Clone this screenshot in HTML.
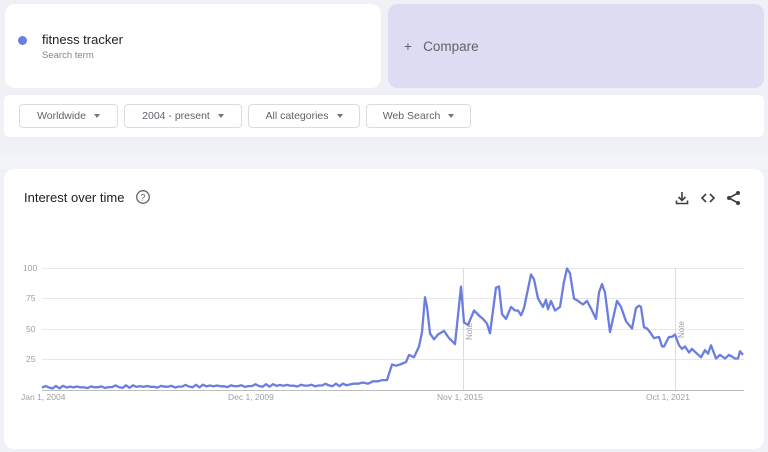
<!DOCTYPE html>
<html><head><meta charset="utf-8"><style>
*{box-sizing:border-box;margin:0;padding:0}
body{width:768px;height:452px;background:#eff1f6;font-family:"Liberation Sans",sans-serif;position:relative;overflow:hidden}
.card{position:absolute;background:#fff;border-radius:10px}
.chip{position:absolute;top:104px;height:24px;border:1px solid #dadce0;border-radius:4px;background:#fff;font-size:10.5px;color:#5f6368;display:flex;align-items:center;justify-content:center;gap:8px}
.chip i{width:0;height:0;border-left:3.5px solid transparent;border-right:3.5px solid transparent;border-top:4px solid #70757a}
.lab{position:absolute;font-size:8.5px;color:#9aa0a6}
</style></head><body>
<div class="card" style="left:5px;top:4px;width:376px;height:84px"></div>
<div style="position:absolute;left:18px;top:36px;width:9px;height:9px;border-radius:50%;background:#6b7ee0"></div>
<div style="position:absolute;left:42px;top:32px;font-size:13px;color:#202124">fitness tracker</div>
<div style="position:absolute;left:42px;top:50px;font-size:9.5px;color:#80868b">Search term</div>
<div class="card" style="left:388px;top:4px;width:376px;height:84px;background:#dcdcf3"></div>
<div style="position:absolute;left:404px;top:39px;font-size:13.5px;color:#5f6368">+&nbsp;&nbsp;&nbsp;Compare</div>
<div class="card" style="left:4px;top:95px;width:760px;height:42px;border-radius:6px"></div>
<div class="chip" style="left:19px;width:99px">Worldwide <i></i></div>
<div class="chip" style="left:124px;width:118px">2004 - present <i></i></div>
<div class="chip" style="left:248px;width:112px">All categories <i></i></div>
<div class="chip" style="left:366px;width:105px">Web Search <i></i></div>
<div style="position:absolute;left:0;top:153px;width:768px;height:16px;background:#f3f4f8"></div>
<div class="card" style="left:4px;top:169px;width:760px;height:280px;border-radius:10px"></div>
<div style="position:absolute;left:24px;top:190px;font-size:13px;color:#202124">Interest over time</div>
<svg style="position:absolute;left:135px;top:189px" width="16" height="16" viewBox="0 0 16 16"><circle cx="8" cy="8" r="6.3" fill="none" stroke="#5f6368" stroke-width="1.3"/><text x="8" y="11.3" font-size="9" text-anchor="middle" fill="#5f6368" font-family="Liberation Sans">?</text></svg>
<svg style="position:absolute;left:672px;top:190px" width="72" height="16" viewBox="0 0 72 16">
<g fill="none" stroke="#3c4043" stroke-width="1.6"><path d="M10 2v8M6.5 7l3.5 3.5 3.5-3.5M4.5 10.5v3h11v-3"/><path d="M34 4l-4 4 4 4M38 4l4 4-4 4"/><path d="M66 3L57 8l9 5"/></g>
<g fill="#3c4043"><circle cx="66" cy="3" r="2"/><circle cx="57" cy="8" r="2"/><circle cx="66" cy="13" r="2"/></g></svg>
<svg style="position:absolute;left:0;top:0" width="768" height="452">
<g stroke="#e8e8e8" stroke-width="1"><line x1="42" y1="268.5" x2="744" y2="268.5"/><line x1="42" y1="298.5" x2="744" y2="298.5"/><line x1="42" y1="329.5" x2="744" y2="329.5"/><line x1="42" y1="359.5" x2="744" y2="359.5"/></g>
<line x1="42" y1="390.5" x2="744" y2="390.5" stroke="#bdbdbd"/>
<line x1="463.5" y1="268" x2="463.5" y2="390" stroke="#ddd"/><line x1="675.5" y1="268" x2="675.5" y2="390" stroke="#ddd"/>
<text x="0" y="0" transform="translate(472,340) rotate(-90)" font-size="8" fill="#9aa0a6" font-family="Liberation Sans">Note</text>
<text x="0" y="0" transform="translate(684,338) rotate(-90)" font-size="8" fill="#9aa0a6" font-family="Liberation Sans">Note</text>
<path id="ln" fill="none" stroke="#6b7ee0" stroke-width="2.3" stroke-linejoin="round"/>
</svg>
<div class="lab" style="left:23px;top:263px">100</div>
<div class="lab" style="left:26px;top:293px">75</div>
<div class="lab" style="left:26px;top:324px">50</div>
<div class="lab" style="left:26px;top:354px">25</div>
<div class="lab" style="left:21px;top:392px">Jan 1, 2004</div>
<div class="lab" style="left:228px;top:392px">Dec 1, 2009</div>
<div class="lab" style="left:437px;top:392px">Nov 1, 2015</div>
<div class="lab" style="left:646px;top:392px">Oct 1, 2021</div>
<script>
var pts=[];
var noise=[1,3,1,0,3,0,3,1,2,1,2,1,1,0,2,1,1,2,0,1];
for(var x=42;x<350;x+=3.5){var i=Math.round((x-42)/3.5);pts.push([x,(noise[i%20]*0.7)+ (x-42)/308*2]);}
var d=[[353,4],[358,4],[363,5],[368,4],[373,6],[378,6],[382,7],[387,7],[392,20],[396,19],[400,20],[406,22],[409,28],[414,26],[419,35],[422,47],[425,76],[427,68],[430,46],[434,41],[438,45],[444,48],[449,42],[455,37],[461,85],[464,55],[468,53],[474,65],[480,60],[483,58],[487,54],[490,46],[496,84],[499,85],[502,62],[506,58],[511,68],[515,65],[518,65],[521,61],[524,67],[531,95],[534,91],[538,75],[543,68],[546,74],[548,66],[551,73],[555,65],[560,68],[564,89],[567,100],[570,96],[574,75],[578,73],[583,70],[587,73],[592,65],[596,58],[599,80],[602,87],[605,80],[610,47],[617,73],[621,68],[626,56],[632,50],[636,67],[639,69],[641,68],[644,51],[647,50],[650,47],[654,42],[659,43],[662,35],[664,35],[669,43],[672,43],[675,45],[679,36],[682,33],[685,35],[689,30],[692,33],[697,29],[701,26],[705,32],[708,29],[711,36],[716,25],[720,28],[725,25],[729,28],[735,25],[738,25],[740,31],[743,28]];
pts=pts.concat(d);
document.getElementById('ln').setAttribute('d','M'+pts.map(function(p){return p[0].toFixed(1)+' '+(388.5-p[1]*1.2).toFixed(1)}).join(' L'));
</script>
</body></html>
